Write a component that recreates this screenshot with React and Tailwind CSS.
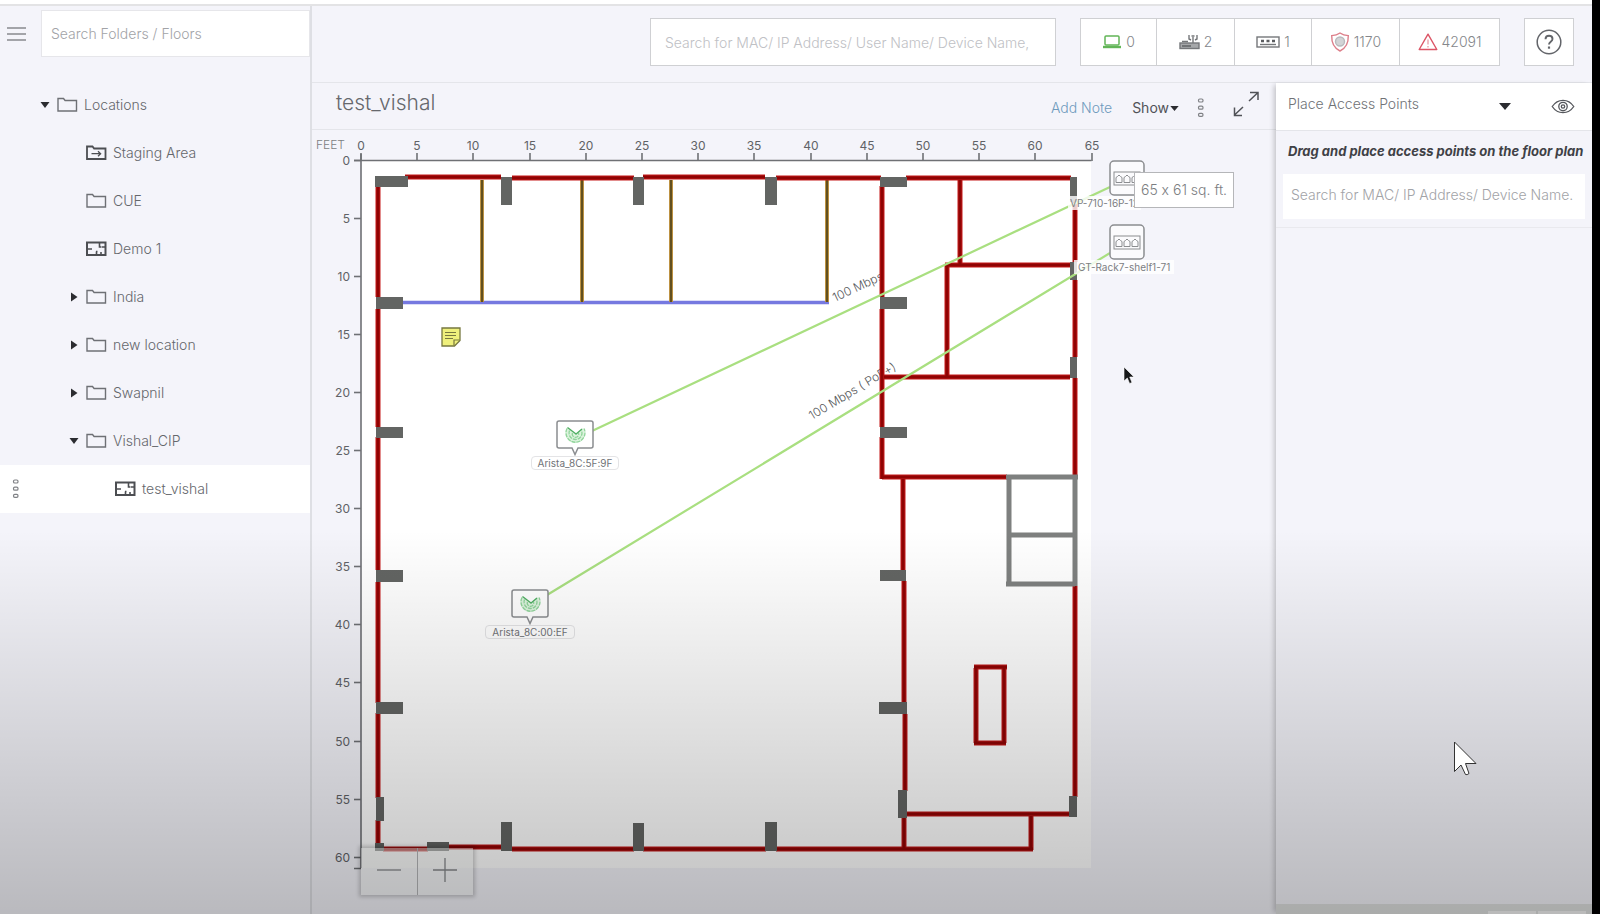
import React from 'react';

const TREE = [
  { name: 'Locations', icon: 'folder', level: 0, open: true },
  { name: 'Staging Area', icon: 'staging', level: 1 },
  { name: 'CUE', icon: 'folder', level: 1 },
  { name: 'Demo 1', icon: 'floor', level: 1 },
  { name: 'India', icon: 'folder', level: 1, open: false },
  { name: 'new location', icon: 'folder', level: 1, open: false },
  { name: 'Swapnil', icon: 'folder', level: 1, open: false },
  { name: 'Vishal_CIP', icon: 'folder', level: 1, open: true },
  { name: 'test_vishal', icon: 'floor', level: 2, selected: true },
];

const INDENT = ['pl-[37px]', 'pl-[66px]', 'pl-[95px]'];

// [x1, y1, x2, y2]
const BRICK_WALLS = [
  [405, 177, 501, 177], [512, 178, 634, 178], [643, 177, 765, 177], [776, 178, 881, 178], [906, 178, 1071, 178],
  [378, 187, 378, 297], [378, 309, 378, 427], [378, 437, 378, 570], [378, 582, 378, 703], [378, 713, 378, 798], [378, 820, 378, 843],
  [383, 849, 428, 849], [448, 847, 502, 847], [512, 849, 634, 849], [643, 849, 766, 849], [776, 849, 1033, 849],
  [882, 186, 882, 297], [882, 309, 882, 427], [882, 437, 882, 479],
  [903, 479, 903, 571], [904, 581, 904, 703], [905, 714, 905, 791], [904, 817, 904, 848],
  [882, 477, 1007, 477], [907, 814, 1070, 814], [1031, 816, 1031, 850],
  [960, 180, 960, 264], [945, 265, 1070, 265], [947, 265, 947, 376], [884, 377, 1070, 377],
  [1075, 202, 1075, 262], [1075, 280, 1075, 357], [1075, 378, 1075, 475], [1075, 586, 1075, 797],
  [974, 667, 1007, 667], [976, 668, 976, 743], [1004, 668, 1004, 743], [974, 743, 1006, 743],
];

const WOOD_WALLS = [482, 582, 671, 827];

const LIFT_WALLS = [
  [1006, 477, 1078, 477], [1008, 535, 1075, 535], [1006, 584, 1075, 584],
  [1009, 477, 1009, 586], [1075, 477, 1075, 586],
];

// [x, y, width, height]
const PILLARS = [
  [375, 176, 33, 11], [501, 177, 11, 28], [633, 177, 11, 28], [765, 177, 12, 28], [880, 177, 27, 10], [1070, 177, 7, 25],
  [376, 297, 27, 12], [880, 297, 27, 12], [376, 427, 27, 11], [880, 427, 27, 11], [376, 570, 27, 12], [880, 570, 26, 11],
  [376, 702, 27, 12], [879, 702, 28, 12], [376, 797, 8, 24], [375, 843, 9, 8], [427, 842, 22, 9], [501, 822, 11, 29],
  [633, 823, 11, 28], [765, 822, 12, 29], [898, 790, 9, 28], [1069, 796, 8, 21], [1070, 357, 7, 21], [1070, 262, 7, 18],
];

function TreeIcon({ type }) {
  if (type === 'floor') {
    return (
      <svg width="21" height="16" viewBox="0 0 21 16" fill="none" stroke="#4c4e52" strokeWidth="2">
        <rect x="1" y="1.5" width="18.5" height="12.5" />
        <path d="M1 8h5M13.5 1.500v4.500h2M16 6h4M10.500 14V10.500M10 10.500h1.500M15 11v3" strokeWidth="1.600" />
      </svg>
    );
  }
  return (
    <svg width="21" height="16" viewBox="0 0 21 16" fill="none" stroke={type === 'staging' ? '#4c4e52' : '#6e7075'} strokeWidth={type === 'staging' ? 1.8 : 1.4}>
      <path d="M1 14V1.500h5.500l1.600 2h11.400V14z" />
      {type === 'staging' && <path d="M5.500 8.700h9M12 6.200l2.600 2.500L12 11.200" strokeWidth="1.300" />}
    </svg>
  );
}

function Caret({ open }) {
  return (
    <svg width="10" height="10" viewBox="0 0 10 10" fill="#2b2c30" className="shrink-0">
      {open === true && <path d="M.5 2h9L5 8z" />}
      {open === false && <path d="M2 .5v9L8.500 5z" />}
    </svg>
  );
}

function Dots() {
  return (
    <svg width="8" height="22" viewBox="0 0 8 22" fill="none" stroke="#808286" strokeWidth="1.200">
      <rect x="1.500" y="2" width="4.500" height="3" rx="1.300" />
      <rect x="1.500" y="9.200" width="4.500" height="3" rx="1.300" />
      <rect x="1.500" y="16.400" width="4.500" height="3" rx="1.300" />
    </svg>
  );
}

function Sidebar() {
  return (
    <aside className="w-[312px] shrink-0 border-r-2 border-[#dedfe4]">
      <div className="flex items-start pt-1">
        <button aria-label="Menu" className="ml-[7px] mt-4 mr-[15px]">
          <svg width="19" height="16" viewBox="0 0 19 16" stroke="#a3a4a9" strokeWidth="1.800">
            <path d="M0 2h19M0 8h19M0 14h19" />
          </svg>
        </button>
        <input
          aria-label="Search folders and floors"
          placeholder="Search Folders / Floors"
          className="h-[47px] min-w-0 flex-1 border border-[#e6e6ea] bg-white px-[9px] text-sm outline-none placeholder:text-[#a2a3a7]"
        />
      </div>
      <ul className="mt-6">
        {TREE.map((n) => (
          <li key={n.name} className={n.selected ? 'bg-white' : ''}>
            <button className="flex h-12 w-full items-center text-left">
              <span className="flex w-0 justify-start overflow-visible">
                {n.selected && <span className="ml-3 w-2 shrink-0"><Dots /></span>}
              </span>
              <span className={`flex items-center ${INDENT[n.level]}`}>
                <span className="flex w-5 justify-start pl-[3px]"><Caret open={n.open} /></span>
                <TreeIcon type={n.icon} />
                <span className="ml-1.5 text-sm text-[#65676c]">{n.name}</span>
              </span>
            </button>
          </li>
        ))}
      </ul>
    </aside>
  );
}

function Stat({ label, value, width, children }) {
  return (
    <button aria-label={label} className={`flex items-center justify-center gap-1 border-l border-[#cfd0d3] first:border-l-0 ${width}`}>
      {children}
      <span className="text-sm text-[#85878b]">{value}</span>
    </button>
  );
}

function TopBar() {
  return (
    <header className="flex h-[77px] items-center justify-end border-b border-[#e4e5ea] pr-[18px] pb-1">
      <input
        aria-label="Search"
        placeholder="Search for MAC/ IP Address/ User Name/ Device Name,"
        className="h-12 w-[406px] border border-[#cfd0d3] bg-white px-[14px] text-sm outline-none placeholder:text-[#c0c1c5]"
      />
      <div className="ml-6 flex h-12 border border-[#cfd0d3] bg-white">
        <Stat label="Clients" value="0" width="w-[75px]">
          <svg width="20" height="16" viewBox="0 0 20 16" fill="none" stroke="#62b557" strokeWidth="1.500">
            <rect x="3" y="2" width="14" height="9" rx="1" />
            <path d="M1 13h18" strokeWidth="2.400" />
          </svg>
        </Stat>
        <Stat label="Access points" value="2" width="w-[78px]">
          <svg width="21" height="18" viewBox="0 0 21 18" fill="none" stroke="#75777a" strokeWidth="1.400">
            <rect x="1" y="10" width="19" height="5.500" fill="#a6a8aa" />
            <path d="M14 10V4M10 2v4l2 1M18 2v4l-2 1M12.500 3h3M3 8.500h6" />
            <path d="M3 13h9" stroke="#5b5d60" />
          </svg>
        </Stat>
        <Stat label="Switches" value="1" width="w-[77px]">
          <svg width="24" height="12" viewBox="0 0 24 12" fill="none" stroke="#75777a" strokeWidth="1.400">
            <rect x="1" y="1" width="22" height="10" />
            <path d="M4 8.500h16" />
            <path d="M5 5h3M10.500 5h3M16 5h3" strokeWidth="2.400" stroke="#5b5d60" />
          </svg>
        </Stat>
        <Stat label="Alerts" value="1170" width="w-[88px]">
          <svg width="20" height="20" viewBox="0 0 20 20" fill="none" stroke="#dd7f8a" strokeWidth="1.400">
            <path d="M10 1c2.500 1.800 5.500 2.500 8.300 2.600C18.500 10.500 16.500 16 10 19 3.500 16 1.500 10.500 1.700 3.600 4.500 3.500 7.500 2.800 10 1z" />
            <circle cx="10" cy="9.500" r="4.500" fill="#d3d4d6" stroke="#b9babd" />
          </svg>
        </Stat>
        <Stat label="Warnings" value="42091" width="w-[100px]">
          <svg width="20" height="18" viewBox="0 0 20 18" fill="none" stroke="#dc5566" strokeWidth="1.400">
            <path d="M10 1.200L18.800 16.500H1.200z" strokeLinejoin="round" />
            <path d="M10 6.500v5M10 13v1.500" stroke="#e9a3ab" />
          </svg>
        </Stat>
      </div>
      <button aria-label="Help" className="ml-6 flex h-12 w-[50px] items-center justify-center border border-[#cfd0d3] bg-white">
        <svg width="26" height="26" viewBox="0 0 26 26" fill="none" stroke="#63656a" strokeWidth="1.500">
          <circle cx="13" cy="13" r="11.800" />
          <path d="M9.500 10.200c.1-4.600 7-4.400 7-.2 0 2.900-3.500 2.800-3.500 5.500" strokeWidth="1.900" />
          <path d="M13 17.500v2.200" strokeWidth="2.200" />
        </svg>
      </button>
    </header>
  );
}

function Lines({ data, outer, inner, outerWidth, innerWidth }) {
  const d = data.map(([a, b, c, e]) => `M${a} ${b}L${c} ${e}`).join('');
  return (
    <>
      <path d={d} stroke={outer} strokeWidth={outerWidth} />
      {inner && <path d={d} stroke={inner} strokeWidth={innerWidth} />}
    </>
  );
}

function FloorPlan() {
  const xTicks = Array.from({ length: 14 }, (_, i) => ({ label: i * 5, x: Math.round(361 + i * 56.2) }));
  const yTicks = Array.from({ length: 13 }, (_, i) => ({ label: i * 5, y: Math.round(160 + i * 58.05) }));
  return (
    <svg width="820" height="760" viewBox="312 130 820 760" className="block" fontFamily="Inter, sans-serif">
      <rect x="361" y="161" width="730" height="707" fill="#fff" />

      {/* rulers */}
      <g stroke="#6f7175" strokeWidth="1.600">
        <path d="M354 160.500H1091.500M361 154V868M354 868.500h7" fill="none" />
        {xTicks.map((t) => <path key={t.label} d={`M${t.x} 153v8`} />)}
        {yTicks.map((t) => <path key={t.label} d={`M354 ${t.y + 0.5}h7`} />)}
      </g>
      <g fontSize="12" fontWeight="400" fill="#606266">
        {xTicks.map((t) => <text key={t.label} x={t.x} y="150" textAnchor="middle">{t.label}</text>)}
        {yTicks.map((t) => <text key={t.label} x="350" y={t.y + 5} textAnchor="end">{t.label}</text>)}
      </g>
      <text x="316" y="149" fontSize="12" fill="#7c7e82">FEET</text>

      <g fontSize="12" fill="#55575a">
        <text transform="translate(835 302) rotate(-25)">100 Mbps</text>
        <text transform="translate(812 420) rotate(-31)">100 Mbps ( PoE+)</text>
      </g>

      {/* walls */}
      <g fill="none">
        <path d="M403 302.500H829" stroke="#7679e0" strokeWidth="3.400" />
        <Lines data={WOOD_WALLS.map((x) => [x, 180, x, 302])} outer="#bd9243" inner="#62501f" outerWidth={4} innerWidth={2} />
        <Lines data={BRICK_WALLS} outer="#c61a1a" inner="#8f0404" outerWidth={5} innerWidth={3} />
        <Lines data={LIFT_WALLS} outer="#7e807f" outerWidth={5} />
      </g>
      {PILLARS.map(([x, y, w, h]) => <rect key={`${x}-${y}`} x={x} y={y} width={w} height={h} fill="#636563" />)}

      {/* uplinks */}
      <path d="M592 431L1110 187M547 595L1110 253" stroke="#a9df80" strokeWidth="2.200" fill="none" />
    </svg>
  );
}

function AccessPoint({ name, place }) {
  return (
    <div className={`absolute flex w-[88px] flex-col items-center ${place}`}>
      <svg width="38" height="36" viewBox="0 0 38 36" fill="none">
        <path d="M3 1h32a2 2 0 0 1 2 2v23a2 2 0 0 1-2 2H22l-3 6.500L16 28H3a2 2 0 0 1-2-2V3a2 2 0 0 1 2-2z" fill="#fff" stroke="#8b8d90" strokeWidth="1.500" />
        <path d="M11 7.500L19.500 14l7.500-6c4 6 1 15-7.500 15S7 14 11 7.500z" fill="#dcf3dd" />
        <path d="M11 8.500a9.500 9.500 0 1 0 17 0M13.500 10.500a6.500 6.500 0 1 0 12 0M16.500 13a3.200 3.200 0 1 0 6 0" stroke="#8fd49a" strokeWidth="1.300" strokeDasharray="4 1" />
        <path d="M11.500 7.500l8.500 6.500M26 9l-6.500 5.500" stroke="#4fae62" strokeWidth="1.400" />
      </svg>
      <span className="rounded-sm border border-[#e4e4e6] bg-white/60 px-1.5 text-[10px] leading-3 font-normal whitespace-nowrap text-[#707276]">{name}</span>
    </div>
  );
}

function SwitchBox() {
  return (
    <svg width="36" height="36" viewBox="0 0 36 36" fill="none" stroke="#8b8d90">
      <rect x="1" y="1" width="34" height="34" rx="4" fill="#fbfbfd" strokeWidth="1.500" />
      <rect x="5" y="12" width="26" height="13" />
      <path d="M7 22.500v-5l1.500-1 1.500-1.500 1.500 1.500 1.500 1v5zM15 22.500v-5l1.500-1 1.500-1.500 1.500 1.500 1.500 1v5zM23 22.500v-5l1.500-1 1.500-1.500 1.500 1.500 1.500 1v5z" />
    </svg>
  );
}

function Canvas() {
  return (
    <div className="relative min-w-0 flex-1 overflow-hidden">
      <FloorPlan />

      <svg width="20" height="20" viewBox="0 0 20 20" className="absolute left-[129px] top-[197px]" stroke="#77783f" fill="none">
        <path d="M1 1h18v12.500L13.500 19H1z" fill="#eff07c" strokeWidth="1.300" />
        <path d="M4 5.500h11M4 8.500h11M4 11.500h8M13 18.500V13h5.500" strokeWidth="1.200" />
      </svg>

      <AccessPoint name="Arista_8C:5F:9F" place="left-[219px] top-[290px]" />
      <AccessPoint name="Arista_8C:00:EF" place="left-[174px] top-[459px]" />

      <div className="absolute left-[797px] top-[30px]"><SwitchBox /></div>
      <span className="absolute left-[756px] top-[66px] bg-white/80 px-0.5 text-[10px] leading-[14px] font-normal text-[#7c7e82]">VP-710-16P-12</span>
      <div className="absolute left-[797px] top-[94px]"><SwitchBox /></div>
      <span className="absolute left-[762px] top-[130px] bg-white/80 px-1 text-[10px] leading-[14px] font-normal text-[#7c7e82]">GT-Rack7-shelf1-71</span>

      <div role="tooltip" className="absolute left-[822px] top-[42px] flex h-9 w-[100px] items-center justify-center border border-[#b5b6b9] bg-white text-sm whitespace-nowrap text-[#7c7e82]">
        65 x 61 sq. ft.
      </div>

      <svg width="12" height="19" viewBox="0 0 12 19" className="absolute left-[811px] top-[236px]">
        <path d="M1 1v14l3.300-3 2.300 5.500 2.400-1L6.700 11H11z" fill="#17181a" stroke="#fff" strokeWidth=".6" />
      </svg>

      <div className="absolute left-[49px] top-[718px] flex h-[47px] w-[112px] bg-[#f4f5f4]/50 shadow-[0_0_4px_2px_rgba(0,0,0,0.2)]">
        <button aria-label="Zoom out" className="flex flex-1 items-center justify-center border-r border-[#b4b5b7] pb-1">
          <svg width="24" height="24" stroke="#85878a" strokeWidth="1.300"><path d="M0 12h24" /></svg>
        </button>
        <button aria-label="Zoom in" className="flex flex-1 items-center justify-center pb-1">
          <svg width="24" height="24" stroke="#85878a" strokeWidth="1.300"><path d="M0 12h24M12 0v24" /></svg>
        </button>
      </div>
    </div>
  );
}

function FloorToolbar() {
  return (
    <div className="flex h-[47px] items-center border-b border-[#e4e5ea] pl-6 pr-[17px]">
      <h1 className="flex-1 pb-1.5 text-[21px] text-[#66686d]">test_vishal</h1>
      <a href="#note" className="pt-1 text-sm text-[#6f9bbd]">Add Note</a>
      <button className="ml-5 flex items-center pt-1 text-sm font-normal text-[#505257]">
        Show
        <svg width="9" height="5" viewBox="0 0 10 6" className="ml-px" fill="#2b2c30"><path d="M0 0h10L5 6z" /></svg>
      </button>
      <button aria-label="More" className="ml-[18px] pt-1"><Dots /></button>
      <button aria-label="Expand" className="ml-7 pb-1">
        <svg width="26" height="26" viewBox="0 0 26 26" fill="none" stroke="#505257" strokeWidth="1.500">
          <path d="M16 10l8.500-8M17 1.500h8v7.500M10 16l-8.500 8M1.500 16.500v8H9" />
        </svg>
      </button>
    </div>
  );
}

function PlacePanel() {
  return (
    <aside className="flex w-[316px] shrink-0 flex-col shadow-[-4px_0_5px_-2px_rgba(0,0,0,0.2)]">
      <div className="flex h-[47px] items-center bg-white pr-[17px]">
        <div className="relative flex-1">
          <select aria-label="Panel mode" className="w-full appearance-none bg-transparent pb-2 pl-3 text-sm text-[#707276] outline-none">
            <option>Place Access Points</option>
          </select>
          <svg width="12" height="7" viewBox="0 0 12 7" className="pointer-events-none absolute top-3 right-10" fill="#2b2c30"><path d="M0 0h12L6 7z" /></svg>
        </div>
        <button aria-label="Toggle visibility">
          <svg width="24" height="15" viewBox="0 0 25 16" fill="none" stroke="#55575c" strokeWidth="1.400">
            <path d="M1 8C7-.8 18-.8 24 8c-6 8.800-17 8.800-23 0z" />
            <circle cx="12.500" cy="8" r="4.500" />
            <circle cx="12.500" cy="8" r="1.800" />
          </svg>
        </button>
      </div>
      <div className="flex-1 border-t border-[#e4e5ea]">
        <p className="mt-[10px] pl-3 text-[13px] leading-5 font-bold whitespace-nowrap text-[#3f4146] italic">
          Drag and place access points on the floor plan
        </p>
        <div className="border-b border-[#e9e9ee] px-[7px] pt-[13px] pb-2">
          <input
            aria-label="Search access points"
            placeholder="Search for MAC/ IP Address/ Device Name."
            className="h-[45px] w-full bg-white px-2 pb-1 text-sm outline-none placeholder:text-[#a2a3a7]"
          />
        </div>
      </div>
      <div className="flex h-[10px] justify-end gap-0.5 overflow-hidden bg-[#dfe1e0] pr-[6px] pt-[7px]">
        <button aria-label="Previous" className="h-4 w-12 bg-[#f4f4f4]" />
        <button aria-label="Next" className="h-4 w-12 bg-[#f4f4f4]" />
      </div>
    </aside>
  );
}

export default function App() {
  return (
    <div className="relative flex min-h-screen bg-[#f4f4fa] font-[Inter,sans-serif] font-light [font-feature-settings:'calt'_0]">
      <div className="flex min-w-0 flex-1 flex-col">
        <div className="h-[6px] border-b-2 border-[#e3e3e5] bg-white" />
        <div className="flex flex-1">
          <Sidebar />
          <div className="flex min-w-0 flex-1 flex-col">
            <TopBar />
            <div className="flex flex-1">
              <main className="flex min-w-0 flex-1 flex-col">
                <FloorToolbar />
                <Canvas />
              </main>
              <PlacePanel />
            </div>
          </div>
        </div>
      </div>

      {/* video player shade */}
      <div className="pointer-events-none absolute inset-x-0 bottom-0 h-[384px] bg-linear-to-t from-black/24 to-transparent" />
      <div className="relative w-2 shrink-0 bg-black" />

      <svg width="24" height="36" viewBox="0 0 24 36" className="pointer-events-none absolute left-[1454px] top-[741px]">
        <path d="M.5 1v29.500l6.500-6.500 4.500 9.500q1.500.8 3.500-1L11.500 22.500h10.500z" fill="#fff" stroke="#333" />
      </svg>
    </div>
  );
}
